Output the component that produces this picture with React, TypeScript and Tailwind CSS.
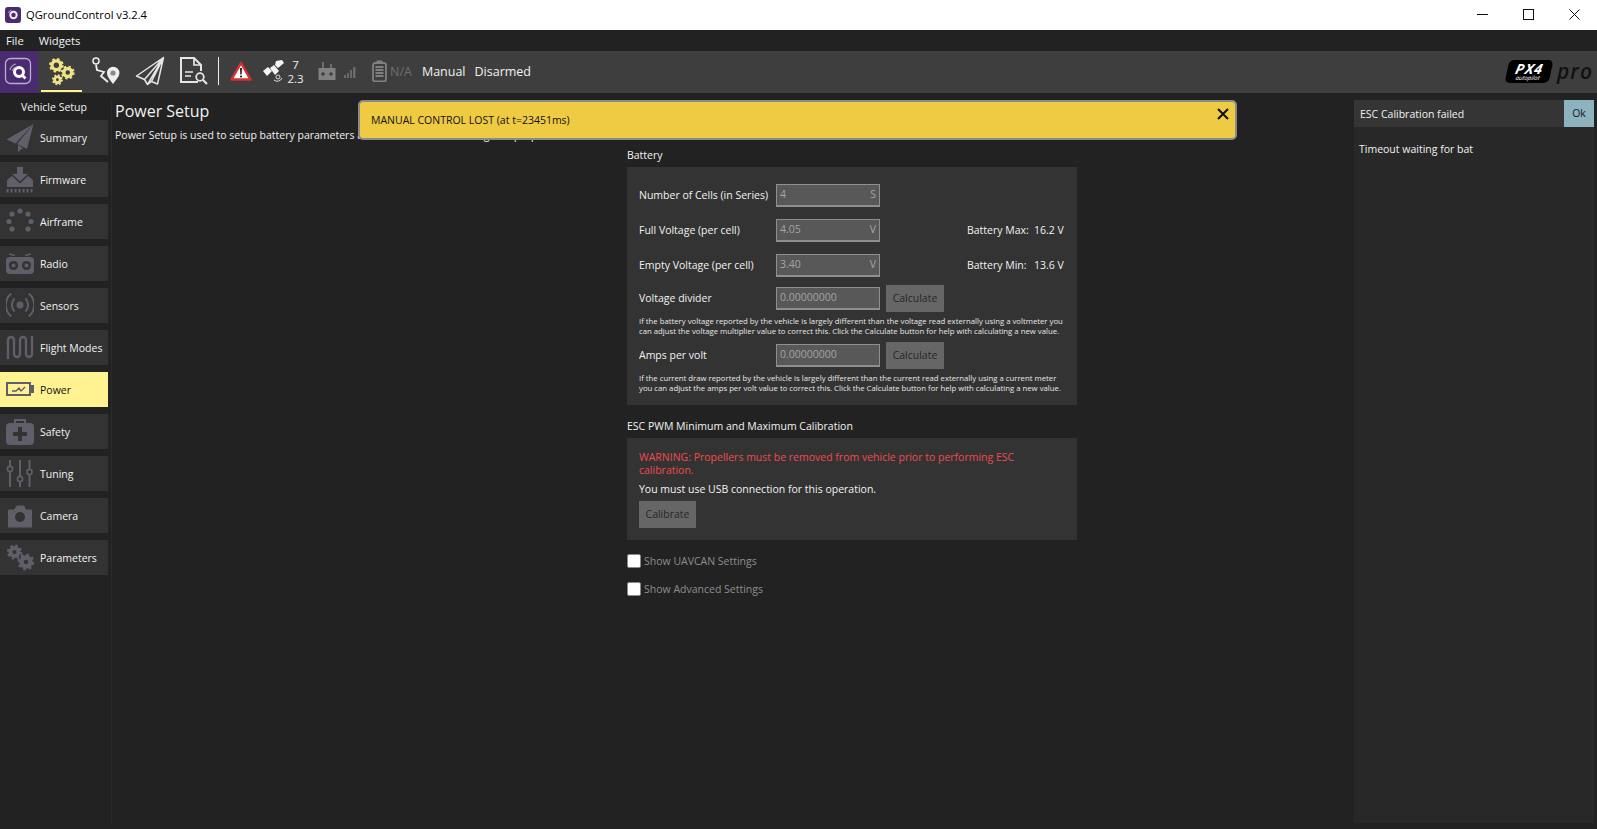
import type { ReactNode } from 'react';

const ICON = '#5f5e69';

function Gear({ cx, cy, r, color, width }: { cx: number; cy: number; r: number; color: string; width: number }) {
  const dash = (2 * Math.PI * (r + width * 0.5)) / 16;
  return (
    <g>
      <circle cx={cx} cy={cy} r={r} fill="none" stroke={color} strokeWidth={width} />
      <circle
        cx={cx}
        cy={cy}
        r={r + width * 0.5}
        fill="none"
        stroke={color}
        strokeWidth={width * 0.8}
        strokeDasharray={`${dash} ${dash}`}
      />
    </g>
  );
}

const sideIcons: Record<string, ReactNode> = {
  Summary: (
    <g fill={ICON}>
      <path d="M27.500 1 0.500 16.500 9.500 20.500Z" />
      <path d="M27.500 1 11 21 21 26Z" />
      <path d="M12 22 12 29 17 25Z" />
    </g>
  ),
  Firmware: (
    <g fill={ICON}>
      <path d="M11 2h6v7h5l-8 7.500L6 9h5Z" />
      <path d="M6 11 1 15v7h26v-7l-5-4-8 7.500Z" />
      {[0, 4, 8, 12, 16, 20, 24].map((x) => (
        <rect key={x} x={x + 0.5} y={24} width={2} height={3.5} />
      ))}
    </g>
  ),
  Airframe: (
    <g fill={ICON}>
      <circle cx="14" cy="4" r="2.600" />
      <circle cx="22" cy="7" r="2.600" />
      <circle cx="25" cy="14.500" r="2.600" />
      <circle cx="22" cy="22" r="2.600" />
      <circle cx="6" cy="22" r="2.600" />
      <circle cx="3" cy="14.500" r="2.600" />
      <circle cx="6" cy="7" r="2.600" />
    </g>
  ),
  Radio: (
    <g>
      <path d="M3 5 9 6.500M25 5 19 6.500" stroke={ICON} strokeWidth="1.600" />
      <rect x="0" y="8" width="28" height="17" rx="4" fill={ICON} />
      <circle cx="7.500" cy="16.500" r="4.500" fill="#333" />
      <circle cx="7.500" cy="16.500" r="2" fill={ICON} />
      <circle cx="20.500" cy="16.500" r="4.500" fill="#333" />
      <circle cx="20.500" cy="16.500" r="2" fill={ICON} />
    </g>
  ),
  Sensors: (
    <g fill="none" stroke={ICON} strokeWidth="2">
      <circle cx="14" cy="14" r="3.500" fill={ICON} stroke="none" />
      <path d="M8.500 7.500a9.500 9.500 0 0 0 0 13M19.500 7.500a9.500 9.500 0 0 1 0 13" />
      <path d="M5 2.500a15.500 15.500 0 0 0 0 23M23 2.500a15.500 15.500 0 0 1 0 23" />
    </g>
  ),
  'Flight Modes': (
    <path
      d="M2 26V7a3 3 0 0 1 6 0v14a3 3 0 0 0 6 0V7a3 3 0 0 1 6 0v14a3 3 0 0 0 6 0V3"
      fill="none"
      stroke={ICON}
      strokeWidth="2.400"
    />
  ),
  Power: (
    <g>
      <rect x="1" y="8" width="23" height="12" fill="none" stroke={ICON} strokeWidth="2" />
      <rect x="25" y="10" width="3" height="8" fill={ICON} />
      <path d="M6 16h4l3-3 2 3 4-4" fill="none" stroke={ICON} strokeWidth="1.400" />
    </g>
  ),
  Safety: (
    <g>
      <path d="M9 6V3h10v3" fill="none" stroke={ICON} strokeWidth="2" />
      <rect x="0" y="6" width="28" height="22" rx="4" fill={ICON} />
      <path d="M12 10h4v5h5v4h-5v5h-4v-5H7v-4h5Z" fill="#333" />
    </g>
  ),
  Tuning: (
    <g stroke={ICON}>
      <path d="M4 1v27M14 1v27M23.500 1v27" strokeWidth="2" />
      <circle cx="4" cy="10" r="2.600" fill="#333" strokeWidth="1.600" />
      <circle cx="14" cy="20" r="2.600" fill="#333" strokeWidth="1.600" />
      <circle cx="23.500" cy="13" r="2.600" fill="#333" strokeWidth="1.600" />
    </g>
  ),
  Camera: (
    <g>
      <path d="M2.500 9h6l2.500-4h7l1.500 4h6v17h-23Z" fill={ICON} stroke={ICON} strokeLinejoin="round" />
      <circle cx="14" cy="16" r="5" fill="#333" />
    </g>
  ),
  Parameters: (
    <g>
      <Gear cx={8.500} cy={9} r={4} color={ICON} width={4} />
      <Gear cx={20} cy={19} r={4.500} color={ICON} width={4.500} />
    </g>
  ),
};

const sideItems = [
  'Summary',
  'Firmware',
  'Airframe',
  'Radio',
  'Sensors',
  'Flight Modes',
  'Power',
  'Safety',
  'Tuning',
  'Camera',
  'Parameters',
];

function Field({ value, unit }: { value: string; unit?: string }) {
  return (
    <div className="flex h-[23px] w-[104px] items-center justify-between border border-b-2 border-[#8f8f8f] bg-[#585858] px-[3px] text-[#a4a4a4]">
      <span>{value}</span>
      {unit && <span>{unit}</span>}
    </div>
  );
}

function CalcButton({ label }: { label: string }) {
  return (
    <div className="ml-[6px] flex h-[27px] w-[58px] items-center justify-center bg-[#666666] text-[#262626]">
      {label}
    </div>
  );
}

function VoltageRow({ label, value, unit, sumLabel, sumValue }: { label: string; value: string; unit: string; sumLabel?: string; sumValue?: string }) {
  return (
    <div className="mb-[12px] flex h-[23px] items-center whitespace-nowrap">
      <div className="w-[137px]">{label}</div>
      <Field value={value} unit={unit} />
      {sumLabel && (
        <div className="ml-[87px] flex">
          <span className="w-[67px]">{sumLabel}</span>
          <span>{sumValue}</span>
        </div>
      )}
    </div>
  );
}

function CalcRow({ label, help1, help2 }: { label: string; help1: string; help2: string }) {
  return (
    <div>
      <div className="flex h-[27px] items-center">
        <div className="w-[137px]">{label}</div>
        <Field value="0.00000000" />
        <CalcButton label="Calculate" />
      </div>
      <div className="mt-[4px] text-[7.750px] leading-[10px] whitespace-nowrap text-[#e8e8e8]">
        <div>{help1}</div>
        <div>{help2}</div>
      </div>
    </div>
  );
}

function CheckRow({ label }: { label: string }) {
  return (
    <div className="flex h-[14px] items-center">
      <div className="h-[14px] w-[14px] rounded-[2px] border border-[#8a8a8a] bg-white" />
      <span className="ml-[3px] pt-[2px] text-[#8e8e8e]">{label}</span>
    </div>
  );
}

export default function App() {
  return (
    <div className="flex h-[829px] w-[1597px] flex-col overflow-hidden bg-[#222222] font-['Open_Sans',sans-serif] text-[10.500px] text-[#f2f2f2]">
      {/* window title */}
      <div className="flex h-[30px] shrink-0 items-center bg-white text-[11.200px] text-black">
        <svg width="16" height="16" viewBox="0 0 16 16" className="ml-[5px]">
          <rect width="16" height="16" rx="3" fill="#4a2a70" />
          <circle cx="8.500" cy="8" r="3.200" fill="none" stroke="#eeeeee" strokeWidth="2" />
          <path d="M3.500 6a5 5 0 0 1 3-3" fill="none" stroke="#9a90b0" strokeWidth="1.200" />
        </svg>
        <span className="ml-[5px]">QGroundControl v3.2.4</span>
        <div className="ml-auto flex items-center pb-[1px]">
          <svg width="11" height="11" viewBox="0 0 11 11" className="mr-[35px]">
            <path d="M0 5.500h11" stroke="#111" />
          </svg>
          <svg width="11" height="11" viewBox="0 0 11 11" className="mr-[35px]">
            <rect x="0.500" y="0.500" width="10" height="10" fill="none" stroke="#111" />
          </svg>
          <svg width="11" height="11" viewBox="0 0 11 11" className="mr-[17px]">
            <path d="M0.500 0.500l10 10M10.500 0.500l-10 10" stroke="#111" />
          </svg>
        </div>
      </div>

      {/* menu */}
      <div className="flex h-[21px] shrink-0 items-center bg-[#222222] pt-[1px] pl-[6px] text-[11.200px]">
        <span>File</span>
        <span className="ml-[15px]">Widgets</span>
      </div>

      {/* toolbar */}
      <div className="flex h-[42px] shrink-0 items-center bg-[#3e3e3e]">
        <div className="flex h-full w-[38px] items-center justify-center bg-[#4a2a70] pr-[2px] pb-[2px]">
          <svg width="28" height="28" viewBox="0 0 28 28">
            <rect x="1.500" y="1.500" width="25" height="25" rx="5" fill="none" stroke="#b9aecb" strokeWidth="1.300" />
            <circle cx="15" cy="15" r="4.500" fill="none" stroke="#ffffff" strokeWidth="3" />
            <path d="M18 18l3.500 3.500" stroke="#ffffff" strokeWidth="2.600" />
            <path d="M6 13a8 8 0 0 1 6-6M8.500 14a5 5 0 0 1 4-4" fill="none" stroke="#a99fbd" strokeWidth="1.200" />
          </svg>
        </div>
        <div className="relative ml-[3px] flex h-full w-[41px] items-center justify-center pr-[3px] pb-[2px]">
          <svg width="29" height="29" viewBox="0 0 28 28">
            <Gear cx={10} cy={8} r={4.200} color="#efe388" width={3.200} />
            <Gear cx={21} cy={15} r={3.800} color="#efe388" width={3.200} />
            <Gear cx={11} cy={22} r={2.800} color="#efe388" width={2.800} />
          </svg>
          <div className="absolute right-0 bottom-[1px] left-0 h-[2px] bg-[#fff291]" />
        </div>
        <div className="flex h-full flex-1 items-center pb-[2px]">
          <svg width="30" height="30" viewBox="0 0 30 30" className="ml-[9px]">
            <circle cx="5" cy="5" r="3" fill="none" stroke="#eeeeee" strokeWidth="1.500" />
            <path d="M5 9l1 5 7 2-3 4 7 6" fill="none" stroke="#eeeeee" strokeWidth="1.800" />
            <path d="M22 28c-4-5-6-8-6-11a6.200 6.200 0 0 1 12.400 0c0 3-2.400 6-6.400 11Z" fill="#eeeeee" />
            <circle cx="22" cy="17" r="2.600" fill="#888888" />
          </svg>
          <svg width="30" height="30" viewBox="0 0 30 30" className="ml-[14px]">
            <path d="M28.500 1.500 1.500 20l8 3.500 3 5 4-3 6 2.500Z M28.500 1.500 9.500 23.500M28.500 1.500 12.500 28.500M28.500 1.500 16.500 25.500" fill="none" stroke="#e6e6e6" strokeWidth="1.500" strokeLinejoin="round" />
          </svg>
          <svg width="28" height="28" viewBox="0 0 28 28" className="ml-[15px]">
            <path d="M18 25H1V1h13l7 7v6" fill="none" stroke="#e6e6e6" strokeWidth="2" />
            <path d="M14 1v7h7M5 15h8M5 19h6" fill="none" stroke="#e6e6e6" strokeWidth="1.700" />
            <circle cx="20" cy="20" r="3.800" fill="none" stroke="#e6e6e6" strokeWidth="1.800" />
            <path d="M23 23l4 4" stroke="#e6e6e6" strokeWidth="2.200" />
          </svg>
          <div className="ml-[10px] h-[28px] w-[1px] bg-[#f0f0f0]" />
          <svg width="22" height="20" viewBox="0 0 22 20" className="ml-[11px]">
            <path d="M11 2 20.500 18.500H1.500Z" fill="#ffffff" stroke="#d63031" strokeWidth="2.500" strokeLinejoin="round" />
            <path d="M10 7h2l-.3 6.500h-1.400Z" fill="#222222" />
            <circle cx="11" cy="15.500" r="1.100" fill="#222222" />
          </svg>
          <svg width="23" height="23" viewBox="0 0 23 23" className="ml-[10px]">
            <path d="M1 11l5-4 4 4-5 5Z M14 1l6-1 2 3-6 5-3-3Z" fill="#f5f5f5" />
            <path d="M8 8l4-3 5 6-4 4Z" fill="#f5f5f5" />
            <circle cx="16" cy="17" r="2" fill="none" stroke="#dddddd" />
            <path d="M12 20a5 5 0 0 0 8-2" fill="none" stroke="#dddddd" />
          </svg>
          <div className="ml-[3px] flex w-[15px] flex-col items-center pt-[2px] text-[11.500px] leading-[14px] text-[#eeeeee]">
            <span>7</span>
            <span>2.3</span>
          </div>
          <svg width="18" height="20" viewBox="0 0 18 20" className="ml-[15px]">
            <path d="M5 1v7M13 3v5" stroke="#808080" strokeWidth="1.400" />
            <rect x="0.500" y="7" width="17" height="12" fill="#808080" />
            <circle cx="5" cy="13" r="1.800" fill="#3e3e3e" />
            <circle cx="13" cy="13" r="1.800" fill="#3e3e3e" />
          </svg>
          <svg width="13" height="13" viewBox="0 0 13 13" className="ml-[8px]">
            <path d="M0 13v-3h2v3ZM3 13V8h2v5ZM6 13V5h2v8ZM9 13V2h2.500v11Z" fill="#6a6a6a" />
          </svg>
          <svg width="15" height="22" viewBox="0 0 15 22" className="ml-[15px]">
            <rect x="4.500" y="0.500" width="6" height="2.500" fill="#808080" />
            <rect x="1" y="3" width="13" height="18.500" rx="2" fill="none" stroke="#808080" strokeWidth="1.800" />
            <path d="M3.500 7h8M3.500 10h8M3.500 13h8M3.500 16h8" stroke="#808080" strokeWidth="1.800" />
          </svg>
          <span className="ml-[3px] pt-[2px] text-[12.500px] text-[#707070]">N/A</span>
          <span className="ml-[10px] pt-[2px] text-[12.500px] text-[#f2f2f2]">Manual</span>
          <span className="ml-[9px] pt-[2px] text-[12.500px] text-[#f2f2f2]">Disarmed</span>
          <div className="mr-[3px] ml-auto flex items-center">
            <div className="flex h-[23px] w-[44px] -skew-x-12 flex-col items-center justify-center rounded-[5px] bg-black text-white italic leading-none">
              <span className="text-[14px] leading-[13px] font-bold tracking-[1px]">PX4</span>
              <span className="text-[6px] leading-[6px]">autopilot</span>
            </div>
            <span className="ml-[6px] w-[37px] text-[21px] leading-none font-semibold tracking-[1px] text-[#111111] italic">pro</span>
          </div>
        </div>
      </div>

      {/* main */}
      <div className="relative flex min-h-0 flex-1">
        <aside className="w-[108px] shrink-0">
          <div className="flex h-[27px] items-center justify-center pt-[3px]">Vehicle Setup</div>
          <div className="flex flex-col gap-[7px]">
            {sideItems.map((name) => (
              <div
                key={name}
                className={
                  name === 'Power'
                    ? 'flex h-[35px] items-center bg-[#fff291] pl-[6px] text-[#111111]'
                    : 'flex h-[35px] items-center bg-[#333333] pl-[6px]'
                }
              >
                <svg width="28" height="29" viewBox="0 0 28 29" className="shrink-0">
                  {sideIcons[name]}
                </svg>
                <span className="ml-[6px] pt-[3px]">{name}</span>
              </div>
            ))}
          </div>
        </aside>
        <div className="mt-[7px] mb-[6px] ml-[3px] w-[1px] bg-[#2a2a2a]" />

        <main className="min-w-0 flex-1 pl-[3px]">
          <h1 className="mt-[5px] h-[26px] text-[16px] leading-[26px]">Power Setup</h1>
          <p className="mt-[2px] h-[18px] leading-[18px]">
            Power Setup is used to setup battery parameters as well as advanced settings for propellers.
          </p>

          <div className="ml-[512px] w-[450px]">
            <div className="mt-[3px] h-[16px] leading-[16px]">Battery</div>
            <div className="mt-[4px] h-[238px] bg-[#333333] pt-[17px] pl-[12px]">
              <VoltageRow label="Number of Cells (in Series)" value="4" unit="S" />
              <VoltageRow label="Full Voltage (per cell)" value="4.05" unit="V" sumLabel="Battery Max:" sumValue="16.2 V" />
              <VoltageRow label="Empty Voltage (per cell)" value="3.40" unit="V" sumLabel="Battery Min:" sumValue="13.6 V" />
              <div className="-mt-[4px]">
                <CalcRow
                  label="Voltage divider"
                  help1="If the battery voltage reported by the vehicle is largely different than the voltage read externally using a voltmeter you"
                  help2="can adjust the voltage multiplier value to correct this. Click the Calculate button for help with calculating a new value."
                />
              </div>
              <div className="mt-[6px]">
                <CalcRow
                  label="Amps per volt"
                  help1="If the current draw reported by the vehicle is largely different than the current read externally using a current meter"
                  help2="you can adjust the amps per volt value to correct this. Click the Calculate button for help with calculating a new value."
                />
              </div>
            </div>

            <div className="mt-[13px] h-[16px] leading-[16px]">ESC PWM Minimum and Maximum Calibration</div>
            <div className="mt-[4px] h-[102px] bg-[#333333] pt-[13px] pr-[40px] pl-[12px]">
              <div className="leading-[13px] text-[#ef4a4f]">
                WARNING: Propellers must be removed from vehicle prior to performing ESC calibration.
              </div>
              <div className="mt-[6px] leading-[13px]">You must use USB connection for this operation.</div>
              <div className="mt-[5px] flex h-[27px] w-[57px] items-center justify-center bg-[#666666] pt-[1px] text-[#262626]">
                Calibrate
              </div>
            </div>

            <div className="mt-[14px] flex flex-col gap-[14px]">
              <CheckRow label="Show UAVCAN Settings" />
              <CheckRow label="Show Advanced Settings" />
            </div>
          </div>
        </main>

        <section className="mt-[7px] mr-[3px] mb-[6px] w-[240px] shrink-0 bg-[#282828]">
          <div className="flex h-[27px] items-center bg-[#353535] pl-[6px]">
            <span className="pt-[3px]">ESC Calibration failed</span>
            <div className="ml-auto flex h-full w-[30px] items-center justify-center bg-[#8cb3be] pt-[1px] text-[#1a1a1a]">Ok</div>
          </div>
          <div className="mt-[15px] pl-[5px]">Timeout waiting for bat</div>
        </section>

        {/* critical vehicle message */}
        <div className="absolute top-[7px] left-[358px] flex h-[40px] w-[879px] items-center rounded-[5px] border-2 border-[#8a8a8a] bg-[#eecb43] pt-[1px] pl-[11px] text-[#111111]">
          MANUAL CONTROL LOST (at t=23451ms)
          <svg width="12" height="12" viewBox="0 0 12 12" className="absolute top-[6px] right-[6px]">
            <path d="M1 1l10 10M11 1L1 11" stroke="#111111" strokeWidth="2" />
          </svg>
        </div>
      </div>
    </div>
  );
}
